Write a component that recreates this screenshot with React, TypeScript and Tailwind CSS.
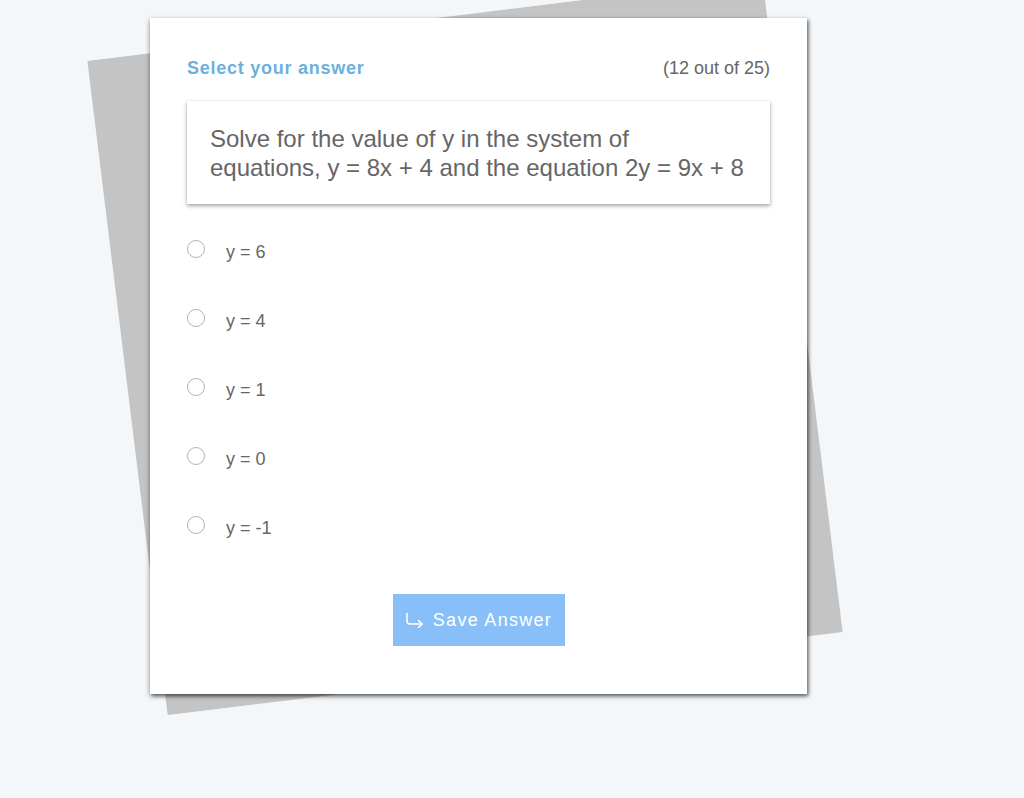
const options = ["y = 6", "y = 4", "y = 1", "y = 0", "y = -1"];

function ReturnArrow() {
  return (
    <svg width="19" height="16" viewBox="0 0 19 16" fill="none" stroke="white" strokeWidth="1.6" strokeLinecap="round" strokeLinejoin="round">
      <path d="M2 1.5v7.5a3 3 0 0 0 3 3h12" />
      <path d="M13.5 8.5l3.5 3.5-3.5 3.5" />
    </svg>
  );
}

export default function App() {
  return (
    <div className="relative min-h-screen w-full overflow-hidden bg-[#f4f7fa] pt-[18px] pb-[104px] font-['Liberation_Sans',Arial,sans-serif]">
      {/* tilted paper behind the card */}
      <div className="absolute left-[125px] top-[17px] w-[680px] h-[659px] bg-[#c4c4c4] -rotate-[7deg]" />

      <div className="relative ml-[150px] w-[657px] bg-white px-[37px] pt-[40px] pb-[48px] shadow-[0_2px_5px_rgba(0,0,0,0.45),2px_2px_3px_rgba(0,0,0,0.35)]">
        <div className="flex items-center justify-between leading-[20px]">
          <span className="text-[18px] font-bold tracking-[0.75px] text-[#6cb0de]">Select your answer</span>
          <span className="text-[18px] text-[#666]">(12 out of 25)</span>
        </div>

        <div className="mt-[23px] bg-white pl-[23px] pr-[20px] pt-[23px] pb-[22px] text-[24px] leading-[29px] text-[#666] shadow-[0_2px_4px_rgba(0,0,0,0.35),0_0_1px_rgba(0,0,0,0.15)]">
          Solve for the value of y in the system of
          <br />
          equations, y = 8x + 4 and the equation 2y = 9x + 8
        </div>

        <div className="mt-[13px]">
          {options.map((o) => (
            <label key={o} className="flex h-[69px] items-center gap-[21px] cursor-pointer">
              <span className="mb-[6px] h-[18px] w-[18px] rounded-full border border-[#b4b4b4] bg-white" />
              <span className="relative top-[1px] text-[18px] text-[#666]">{o}</span>
            </label>
          ))}
        </div>

        <div className="mt-[32px] flex justify-center">
          <button className="flex h-[52px] w-[172px] items-center justify-center gap-[9px] bg-[#88bff8] text-[18px] tracking-[1.3px] text-white">
            <ReturnArrow />
            <span>Save Answer</span>
          </button>
        </div>
      </div>
    </div>
  );
}
